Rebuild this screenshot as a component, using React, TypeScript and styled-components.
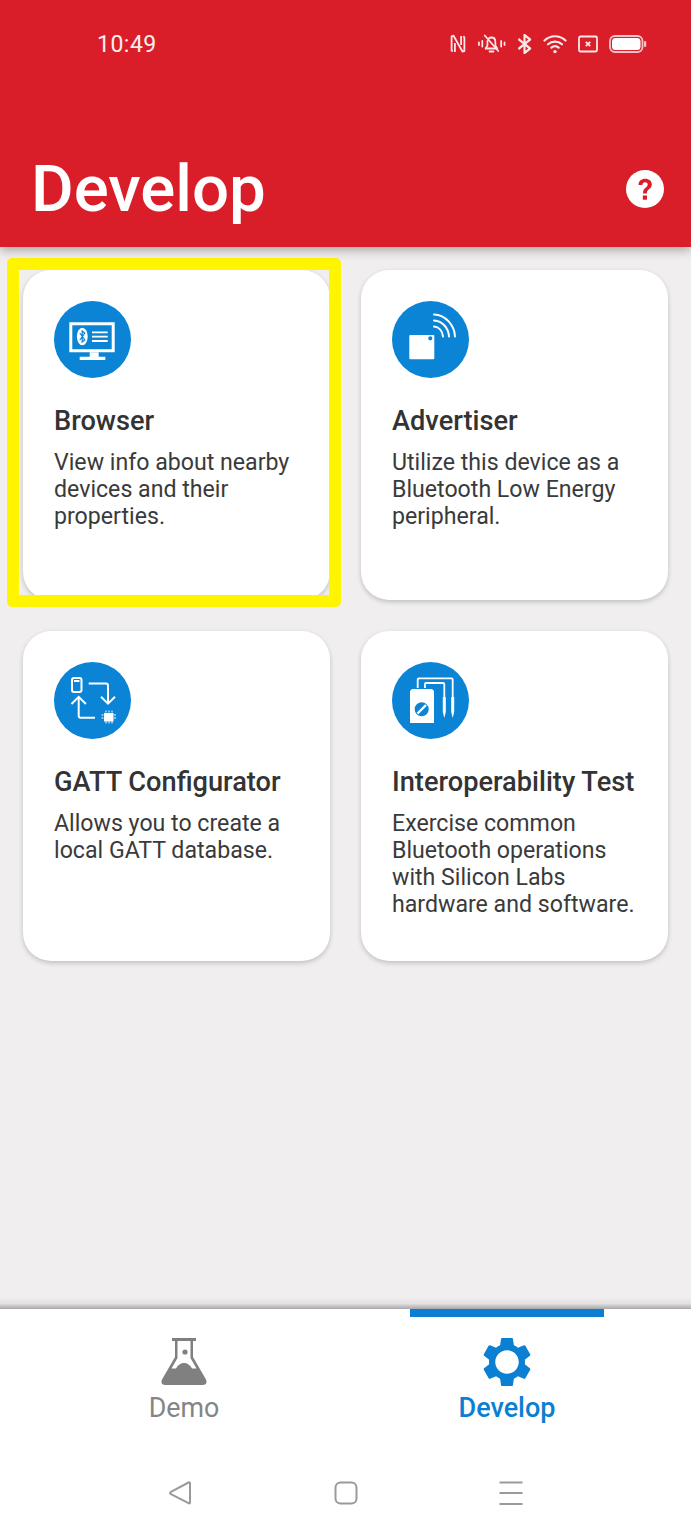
import React from 'react';
import styled, { createGlobalStyle } from 'styled-components';

const GlobalStyle = createGlobalStyle`
  html, body {
    margin: 0;
    padding: 0;
    background: #F0EEEF;
    font-family: Roboto, 'Liberation Sans', sans-serif;
  }
`;

/* ─── ICONS ─── */
const NfcIcon = () => (
  <svg width="16" height="20" viewBox="0 0 18 20" preserveAspectRatio="none" fill="none" stroke="#fbe9ea" strokeWidth="2" strokeLinejoin="round">
    <path d="M3 17.5 L1.8 16.5 V2.5 L4 1.8 L14 17.5 L16.2 17 V3.5 L15 2.2" />
    <path d="M5.5 18 V9 M12.5 2 V11" />
  </svg>
);

const MuteIcon = () => (
  <svg width="29" height="20" viewBox="0 0 30 20" preserveAspectRatio="none" fill="none" stroke="#fbe9ea" strokeWidth="1.8" strokeLinecap="round" strokeLinejoin="round">
    <path d="M9 14.5 H21 L19 11.5 V8 C19 5 17 3.5 15 3.5 C14 3.5 13 3.8 12.3 4.5" />
    <path d="M10.8 7 L10.8 11.5 L9 14.5" />
    <path d="M8 1.5 L22 17" />
    <path d="M13 17.5 H17" />
    <path d="M2 8.5 V11 M5.5 7 V12.5 M25 7 V12.5 M28.5 8.5 V11" />
  </svg>
);

const BluetoothGlyph = () => (
  <svg width="15" height="20" viewBox="0 0 16 20" preserveAspectRatio="none" fill="none" stroke="#fbe9ea" strokeWidth="2.2" strokeLinejoin="round">
    <path d="M1.5 5 L14 14.5 L8 19 V1 L14 5.5 L1.5 15" />
  </svg>
);

const WifiIcon = () => (
  <svg width="24" height="20" viewBox="0 0 24 20" fill="none" stroke="#fbe9ea" strokeWidth="2.2" strokeLinecap="round">
    <path d="M1.5 6.5 C7.5 0.8 16.5 0.8 22.5 6.5" />
    <path d="M5 10.3 C9 6.6 15 6.6 19 10.3" />
    <path d="M8.4 13.7 C10.8 11.6 13.2 11.6 15.6 13.7" />
    <circle cx="12" cy="17.6" r="1.7" fill="#fbe9ea" stroke="none" />
  </svg>
);

const SimIcon = () => (
  <svg width="20" height="18" viewBox="0 0 20 18" fill="none" stroke="#fbe9ea">
    <rect x="1" y="1.5" width="18" height="15" rx="1.5" strokeWidth="1.8" />
    <path d="M7.8 6.8 L12.2 11.2 M12.2 6.8 L7.8 11.2" strokeWidth="1.8" />
  </svg>
);

const BatteryIcon = () => (
  <svg width="38" height="18" viewBox="0 0 38 18" fill="none">
    <rect x="1" y="1" width="32.5" height="16" rx="5" stroke="#f3c3c6" strokeWidth="1.8" />
    <rect x="3" y="3" width="28.5" height="12" rx="3.5" fill="#fff" />
    <rect x="35" y="6" width="2.2" height="6" rx="1" fill="#f3c3c6" />
  </svg>
);

const HelpIcon = () => (
  <svg width="38" height="38" viewBox="0 0 38 38">
    <circle cx="19" cy="19" r="19" fill="#fff" />
    <path d="M12.5 15 C12.5 11 15.5 8.8 19.2 8.8 C23 8.8 25.8 11 25.8 14.5 C25.8 19 20.8 19 20.8 23.5 H17 C17 17.5 21.7 17.8 21.7 14.6 C21.7 13.2 20.7 12.3 19.2 12.3 C17.6 12.3 16.5 13.4 16.4 15 Z" fill="#D91E2A" />
    <rect x="16.8" y="25.5" width="4.2" height="4.2" fill="#D91E2A" />
  </svg>
);

const BrowserGlyph = () => (
  <svg width="77" height="77" viewBox="0 0 77 77" fill="none">
    <path fillRule="evenodd" d="M15.3 21.3 H60.7 V51.3 H15.3 Z M18.3 24.3 V48.3 H57.7 V24.3 Z" fill="#fff" />
    <ellipse cx="28.3" cy="35.5" rx="5.4" ry="8.7" fill="#fff" />
    <path d="M25.8 32 L30.8 38.8 L28.2 41 V30 L30.8 32.2 L25.8 39" stroke="#0B84D6" strokeWidth="1.2" />
    <path d="M38 31.3 H53.7 M38 35.7 H53.7 M38 40 H53.7" stroke="#fff" strokeWidth="1.8" />
    <path d="M35.7 51.3 H44.7 V55.7 H51.3 V59 H25.7 V55.7 H35.7 Z" fill="#fff" />
  </svg>
);

const AdvertiserGlyph = () => (
  <svg width="77" height="77" viewBox="0 0 77 77" fill="none">
    <path fillRule="evenodd" d="M17.3 35 Q17.3 34 18.3 34 H41.3 Q42.3 34 42.3 35 V57.3 Q42.3 58.3 41.3 58.3 H18.3 Q17.3 58.3 17.3 57.3 Z M38.3 35.2 A2.1 2.1 0 1 0 38.3 39.4 A2.1 2.1 0 1 0 38.3 35.2 Z" fill="#fff" />
    <g stroke="#fff" strokeWidth="2" strokeLinecap="round">
      <path d="M42 25.5 C47 26 50.5 30 51 35.5" />
      <path d="M42 19.5 C50.5 20 56.5 27 57 35.5" />
      <path d="M42 13.5 C53.5 14 62.5 24 63 35.5" />
    </g>
  </svg>
);

const GattGlyph = () => (
  <svg width="77" height="77" viewBox="0 0 77 77" fill="none" stroke="#fff" strokeWidth="2">
    <rect x="18" y="16" width="9.5" height="14" rx="2" />
    <path d="M20 19 H25.5" />
    <path d="M34.7 21.5 H52 Q54 21.5 54 23.5 V41" />
    <path d="M47 34.7 L54 41.7 L61 34.7" />
    <path d="M41 55.7 H26.7 Q24.7 55.7 24.7 53.7 V35.5" />
    <path d="M17.5 42 L24.7 34.8 L31.9 42" />
    <rect x="50" y="51" width="9.5" height="8.5" fill="#fff" stroke="none" />
    <path d="M52 48.5 V61.5 M55 48.5 V61.5 M58 48.5 V61.5" strokeWidth="1" strokeDasharray="2 9" />
    <path d="M47.5 53 H62 M47.5 56 H62" strokeWidth="1" strokeDasharray="2 10.5" />
  </svg>
);

const InteropGlyph = () => (
  <svg width="77" height="77" viewBox="0 0 77 77" fill="none">
    <path fillRule="evenodd" d="M18 29 L20 27 H40 L42 29 V61 H18 Z M29.7 40.3 A7 7 0 1 0 29.7 54.3 A7 7 0 1 0 29.7 40.3 Z" fill="#fff" />
    <path d="M25.5 51.5 L34 43" stroke="#fff" strokeWidth="2.4" />
    <path d="M25.7 26 V17.5 Q25.7 16.3 27 16.3 H59.5 Q60.7 16.3 60.7 17.5 V35" stroke="#fff" strokeWidth="1.8" />
    <path d="M33 26 V22 Q33 21 34 21 H51 Q52.3 21 52.3 22.3 V35" stroke="#fff" strokeWidth="1.8" />
    <path d="M50.8 35 H53.8 V50 L52.3 56 L50.8 50 Z M59.2 35 H62.2 V50 L60.7 56 L59.2 50 Z" fill="#fff" />
  </svg>
);

const FlaskIcon = () => (
  <svg width="46" height="48" viewBox="0 0 46 48">
    <path fill="#808080" fillRule="evenodd" d="M11 0 H35 V3 H32 V19 L45 41.5 Q47 47 41.5 47 H4.5 Q-1 47 1 41.5 L14 19 V3 H11 Z M16.5 3 V20 L10.5 30.5 H15 Q18 25 23 25 Q28 25 31 30.5 H35.5 L29.5 20 V3 Z" />
    <circle cx="24" cy="14" r="2.6" fill="#808080" />
  </svg>
);

const GearIcon = () => (
  <svg width="48" height="48" viewBox="2.4 2 19.2 20">
    <path fill="#0B7FD1" d="M19.43 12.98c.04-.32.07-.64.07-.98s-.03-.66-.07-.98l2.11-1.65c.19-.15.24-.42.12-.64l-2-3.46c-.12-.22-.39-.3-.61-.22l-2.49 1c-.52-.4-1.08-.73-1.69-.98l-.38-2.65C14.46 2.18 14.25 2 14 2h-4c-.25 0-.46.18-.49.42l-.38 2.65c-.61.25-1.17.59-1.69.98l-2.49-1c-.23-.09-.49 0-.61.22l-2 3.46c-.13.22-.07.49.12.64l2.11 1.65c-.04.32-.07.65-.07.98s.03.66.07.98l-2.11 1.65c-.19.15-.24.42-.12.64l2 3.46c.12.22.39.3.61.22l2.49-1c.52.4 1.08.73 1.69.98l.38 2.65c.03.24.24.42.49.42h4c.25 0 .46-.18.49-.42l.38-2.65c.61-.25 1.17-.59 1.69-.98l2.49 1c.23.09.49 0 .61-.22l2-3.46c.12-.22.07-.49-.12-.64l-2.11-1.65zM12 16.9c-2.7 0-4.9-2.2-4.9-4.9s2.2-4.9 4.9-4.9 4.9 2.2 4.9 4.9-2.2 4.9-4.9 4.9z" />
  </svg>
);

const BackIcon = () => (
  <svg width="24" height="24" viewBox="0 0 24 24" fill="none" stroke="#9a9a9a" strokeWidth="2" strokeLinejoin="round">
    <path d="M22 2 V21.5 Q22 23 20.5 22.2 L2.5 12.8 Q1.5 12 2.5 11.2 L20.5 1.5 Q22 1 22 2 Z" />
  </svg>
);

const HomeIcon = () => (
  <svg width="24" height="24" viewBox="0 0 24 24" fill="none" stroke="#9a9a9a" strokeWidth="2">
    <rect x="1.5" y="1.5" width="21" height="21" rx="5" />
  </svg>
);

const MenuIcon = () => (
  <svg width="24" height="24" viewBox="0 0 24 24" fill="none" stroke="#9a9a9a" strokeWidth="2">
    <path d="M0.5 1.5 H23.5 M0.5 12 H23.5 M0.5 23 H23.5" />
  </svg>
);

/* ─── DATA ─── */
const cards = [
  { title: 'Browser', text: ['View info about nearby', 'devices and their', 'properties.'], icon: <BrowserGlyph />, marked: true },
  { title: 'Advertiser', text: ['Utilize this device as a', 'Bluetooth Low Energy', 'peripheral.'], icon: <AdvertiserGlyph /> },
  { title: 'GATT Configurator', text: ['Allows you to create a', 'local GATT database.'], icon: <GattGlyph /> },
  { title: 'Interoperability Test', text: ['Exercise common', 'Bluetooth operations', 'with Silicon Labs', 'hardware and software.'], icon: <InteropGlyph /> },
];

export default function App() {
  return (
    <Screen>
      <GlobalStyle />
      <Header>
        <StatusBar>
          <Clock>10:49</Clock>
          <StatusIcons>
            <NfcIcon />
            <MuteIcon />
            <BluetoothGlyph />
            <WifiIcon />
            <SimIcon />
            <BatteryIcon />
          </StatusIcons>
        </StatusBar>
        <TitleRow>
          <Title>Develop</Title>
          <HelpIcon />
        </TitleRow>
      </Header>

      <Content>
        {cards.map((card) => (
          <Card key={card.title}>
            {card.marked && <Highlight />}
            <IconCircle>{card.icon}</IconCircle>
            <CardTitle>{card.title}</CardTitle>
            <CardText>
              {card.text.map((line) => (
                <div key={line}>{line}</div>
              ))}
            </CardText>
          </Card>
        ))}
      </Content>

      <TabBar>
        <Tab>
          <TabIcon><FlaskIcon /></TabIcon>
          <TabLabel>Demo</TabLabel>
        </Tab>
        <Tab $active>
          <TabIcon><GearIcon /></TabIcon>
          <TabLabel $active>Develop</TabLabel>
        </Tab>
      </TabBar>

      <SystemNav>
        <BackIcon />
        <HomeIcon />
        <MenuIcon />
      </SystemNav>
    </Screen>
  );
}

/* ─── STYLED COMPONENTS ─── */
const Screen = styled.div`
  width: 691px;
  height: 1536px;
  display: flex;
  flex-direction: column;
  overflow: hidden;
  background: #F0EEEF;
`;

const Header = styled.header`
  height: 247px;
  flex: none;
  background: #D91E2A;
  padding: 0 27px 0 31px;
  box-sizing: border-box;
  box-shadow: 0 3px 10px rgba(0, 0, 0, 0.32);
  position: relative;
  z-index: 1;
`;

const StatusBar = styled.div`
  height: 88px;
  padding-left: 66px;
  padding-right: 17px;
  display: flex;
  align-items: center;
  justify-content: space-between;
`;

const Clock = styled.span`
  font-size: 23px;
  color: #fbeeee;
  letter-spacing: 0.5px;
`;

const StatusIcons = styled.div`
  display: flex;
  align-items: center;
  gap: 11px;
`;

const TitleRow = styled.div`
  height: 112px;
  margin-top: 44px;
  padding-top: 1px;
  box-sizing: border-box;
  display: flex;
  align-items: center;
  justify-content: space-between;
`;

const Title = styled.h1`
  margin: 0;
  font-size: 65.4px;
  font-weight: 500;
  line-height: 1;
  color: #fff;
`;

const Content = styled.main`
  flex: 1;
  padding: 23px 23px 0;
  display: grid;
  grid-template-columns: 307px 307px;
  grid-auto-rows: 330px;
  column-gap: 31px;
  row-gap: 31px;
  align-content: start;
`;

const Card = styled.section`
  position: relative;
  background: #fff;
  border-radius: 28px;
  padding: 31px 20px 0 31px;
  box-shadow: 0 2px 5px rgba(0, 0, 0, 0.2);
`;

const Highlight = styled.div`
  position: absolute;
  left: -16px;
  top: -12px;
  width: 310px;
  height: 325px;
  border: 12px solid #FFF500;
  border-radius: 5px;
  pointer-events: none;
`;

const IconCircle = styled.div`
  width: 77px;
  height: 77px;
  border-radius: 50%;
  background: #0B84D6;
`;

const CardTitle = styled.h2`
  margin: 27px 0 12px;
  font-size: 27.2px;
  font-weight: 500;
  line-height: 32px;
  color: #333;
  white-space: nowrap;
`;

const CardText = styled.div`
  font-size: 23.15px;
  line-height: 27px;
  color: #3a3a3a;
  white-space: nowrap;
`;

const TabBar = styled.nav`
  height: 141px;
  flex: none;
  background: #fff;
  display: grid;
  grid-template-columns: 368px 1fr;
  padding-right: 87px;
  position: relative;

  /* soft shadow sitting on the page above the bar */
  &::before {
    content: '';
    position: absolute;
    left: 0;
    right: 0;
    top: -12px;
    height: 12px;
    background: linear-gradient(to bottom, rgba(0, 0, 0, 0), rgba(0, 0, 0, 0.06) 55%, rgba(0, 0, 0, 0.3));
  }
`;

const Tab = styled.div<{ $active?: boolean }>`
  margin-left: ${(p) => (p.$active ? '42px' : '0')};
  display: flex;
  flex-direction: column;
  align-items: center;
  border-top: 8px solid ${(p) => (p.$active ? '#0B7FD1' : 'transparent')};
`;

const TabIcon = styled.div`
  height: 48px;
  margin-top: 21px;
`;

const TabLabel = styled.span<{ $active?: boolean }>`
  margin-top: 6px;
  font-size: ${(p) => (p.$active ? '27px' : '26.8px')};
  line-height: 32px;
  font-weight: ${(p) => (p.$active ? 500 : 400)};
  color: ${(p) => (p.$active ? '#0B7FD1' : '#858585')};
`;

const SystemNav = styled.div`
  height: 86px;
  flex: none;
  background: #fff;
  padding: 31px 168px 0;
  box-sizing: border-box;
  display: flex;
  align-items: flex-start;
  justify-content: space-between;
`;
